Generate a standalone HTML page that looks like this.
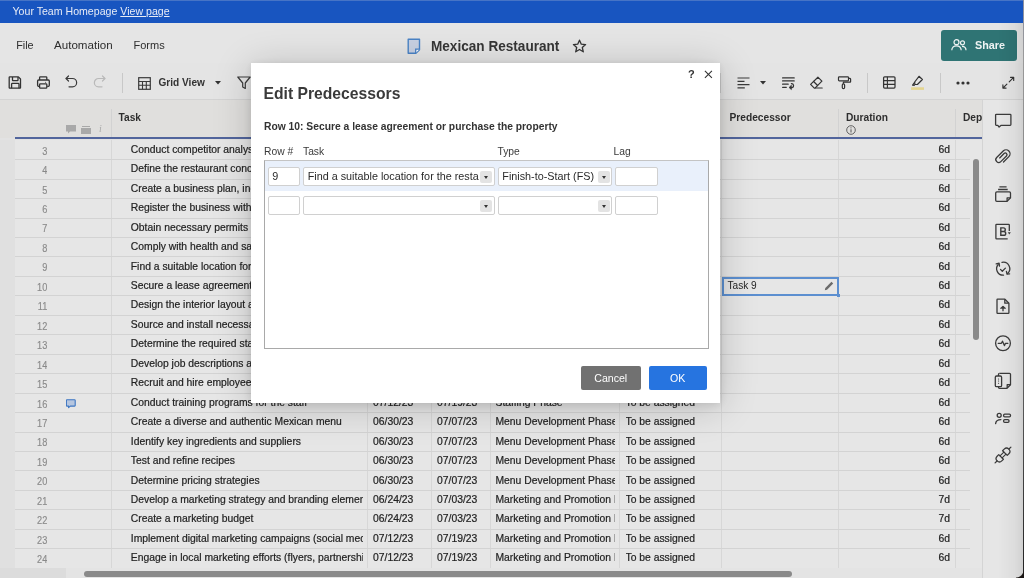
<!DOCTYPE html>
<html><head><meta charset="utf-8">
<style>
*{box-sizing:border-box;margin:0;padding:0}
html,body{width:1024px;height:578px;overflow:hidden}
#wrap{position:absolute;left:0;top:0;width:1024px;height:578px;overflow:hidden;will-change:transform}
body{position:relative;background:#e4e4e4;font-family:"Liberation Sans",sans-serif;color:#2a2a2a}
.abs{position:absolute}
#topbar{position:absolute;left:0;top:0;width:1024px;height:23px;background:#1855c0;border-top:1px solid #4674c6;color:#e8ecf6;font-size:10.6px;line-height:21.5px;padding-left:12.5px;white-space:nowrap}
#topbar u{text-decoration:underline}
#menubar{position:absolute;left:0;top:23px;width:1024px;height:40px;background:#e5e5e5}
.menu{position:absolute;top:16px;font-size:10.9px;color:#2e2e2e;line-height:13px}
#title{position:absolute;left:431px;top:36px;font-size:14.5px;font-weight:bold;color:#363636;line-height:16px;white-space:nowrap;transform:scaleX(0.937);transform-origin:0 0}
#share{position:absolute;left:941px;top:6.5px;width:76px;height:31px;background:#2f7474;border-radius:3px;color:#eef3f3}
#share span{position:absolute;left:34px;top:9px;font-size:10.8px;font-weight:bold;line-height:13px}
#toolbar{position:absolute;left:0;top:63px;width:1024px;height:37px;background:#e4e4e4;border-bottom:1px solid #d3d3d3}
.tsep{position:absolute;top:10px;width:1px;height:20px;background:#c8c8c8}
#gridview{position:absolute;left:158.5px;top:13px;font-size:10.1px;font-weight:bold;color:#333;line-height:13px}
#grid{position:absolute;left:0;top:100px;width:982px;height:478px;background:#e2e2e2}
#ghead{position:absolute;left:0;top:0;width:982px;height:38px;background:#e0dfdd}
.hd{position:absolute;top:11px;font-size:10.2px;font-weight:bold;color:#2e2e2e;line-height:13px}
#hline{position:absolute;left:15px;top:37.2px;width:967px;height:2px;background:#52659c}
#gbody{position:absolute;left:15px;top:140px;width:967px;height:428px;background:#e6e6e6}
.row{position:absolute;left:15px;width:955px;height:19.456px;border-bottom:1px solid #d3d3d3}
.row span{position:absolute;white-space:nowrap;overflow:hidden;font-size:10.35px;line-height:13px}
.rn{right:auto;left:0;width:32.3px;text-align:right;top:3.9px;color:#8a8a8a;font-size:10.2px!important;transform:scaleX(0.9);transform-origin:100% 0;-webkit-text-stroke:0.15px #8a8a8a}
.c{top:2.1px;color:#222;-webkit-text-stroke:0.2px #222}
.tk{left:115.8px;width:232.2px}
.sd{left:358px;width:58px}
.ed{left:422px;width:55px}
.ph{left:480.5px;width:119.5px}
.as{left:610.5px;width:95px}
.du{left:830px;width:105px;text-align:right}
.cm{left:51px;top:5px;width:10px;height:10px}
.vl{position:absolute;top:140px;width:1px;height:428px;background:#d7d7d7}
.vh{position:absolute;top:8.5px;width:1px;height:30px;background:#d2d2d2}
#sidebar{position:absolute;left:982px;top:100px;width:39px;height:478px;background:#e6e6e6;border-left:1px solid #d4d4d4}
#edge{position:absolute;left:998px;top:23px;width:26px;height:555px;background:linear-gradient(90deg,rgba(0,0,0,0),rgba(0,0,0,0.035) 60%,rgba(0,0,0,0.09))}
#edge2{position:absolute;left:1023px;top:0;width:1px;height:578px;background:linear-gradient(180deg,#8a8fa0,#9a9a9a 10%,#6a6a6a 60%,#222)}
#corner{position:absolute;left:1016px;top:570px;width:8px;height:8px;background:radial-gradient(circle at 0 0,rgba(0,0,0,0) 7px,#1a1614 8px)}
#vscroll{position:absolute;left:973px;top:159px;width:5.5px;height:181px;background:#8a8a8a;border-radius:3px}
#hscrollbg{position:absolute;left:0;top:567.5px;width:982px;height:10.5px;background:#e4e4e4}
#hscrollleft{position:absolute;left:0;top:567.5px;width:66px;height:10.5px;background:#dcdcdc}
#hscroll{position:absolute;left:84px;top:571px;width:708px;height:6px;background:#8a8a8a;border-radius:3px}
#gutter{position:absolute;left:0;top:140px;width:15px;height:438px;background:#e0e0e0}
/* modal */
#modal{position:absolute;left:251px;top:63px;width:468.5px;height:340px;background:#fff;box-shadow:0 1px 8px rgba(0,0,0,0.10),0 4px 36px rgba(0,0,0,0.20)}
#mtitle{position:absolute;left:12.5px;top:22px;font-size:15.7px;font-weight:bold;color:#3a3a3a;line-height:18px;white-space:nowrap}
#msub{position:absolute;left:13px;top:57px;font-size:10.3px;font-weight:bold;color:#333;line-height:13px;white-space:nowrap}
.mh{position:absolute;top:82px;font-size:10.3px;color:#3a3a3a;line-height:13px}
#mtable{position:absolute;left:13px;top:97px;width:444.5px;height:189px;border:1px solid #a9a9a9;border-top-color:#c4c4c4}
#hlrow{position:absolute;left:0;top:0;width:443px;height:29.5px;background:#e9f0fb}
.inp{position:absolute;height:19px;background:#fff;border:1px solid #d0d0d0;border-radius:2px;font-size:10.8px;color:#2a2a2a;line-height:17px;padding-left:3.5px;white-space:nowrap;overflow:hidden}
.dd{position:absolute;top:3px;width:12px;height:12px;background:#e3e3e3;border-radius:2px}
.dd:after{content:"";position:absolute;left:3.5px;top:5px;border-left:2.5px solid transparent;border-right:2.5px solid transparent;border-top:3px solid #333}
.btn{position:absolute;top:302.5px;height:24px;border-radius:2px;color:#fff;font-size:10.6px;line-height:24px;text-align:center}
#mhelp{position:absolute;left:437px;top:4.5px;font-size:11px;font-weight:bold;color:#333;line-height:13px}
</style></head><body><div id="wrap">
<div id="topbar">Your Team Homepage <u>View page</u></div>
<div id="menubar">
  <span class="menu" style="left:16.2px;font-size:10.8px">File</span>
  <span class="menu" style="left:54px;top:15.4px;font-size:11.6px">Automation</span>
  <span class="menu" style="left:133.5px;font-size:11px">Forms</span>
  <svg class="abs" style="left:407px;top:15px" width="14" height="16" viewBox="0 0 14 16"><path d="M1.2 1.2h11.3v10.5l-3.6 3.6H1.2z" fill="#c7d0e2" stroke="#4a83c6" stroke-width="1.4" stroke-linejoin="round"/><path d="M12.5 11.2h-3.8v3.9" fill="#fff" stroke="#4a83c6" stroke-width="1.3"/></svg>
  <div id="title" style="top:15.3px">Mexican Restaurant</div>
  <svg class="abs" style="left:572px;top:15.5px" width="15" height="14" viewBox="0 0 15 14"><path d="M7.5 1.2l1.8 4 4.3.4-3.3 2.9 1 4.3-3.8-2.3-3.8 2.3 1-4.3-3.3-2.9 4.3-.4z" fill="none" stroke="#333" stroke-width="1.3" stroke-linejoin="round"/></svg>
  <div id="share">
    <svg class="abs" style="left:10px;top:9.5px" width="16" height="12" viewBox="0 0 16 12"><circle cx="5.5" cy="3.2" r="2.5" fill="none" stroke="#eef3f3" stroke-width="1.2"/><path d="M0.8 11.3c0-2.8 2-4.5 4.7-4.5s4.7 1.7 4.7 4.5" fill="none" stroke="#eef3f3" stroke-width="1.2"/><circle cx="11.5" cy="3.8" r="2" fill="none" stroke="#eef3f3" stroke-width="1.2"/><path d="M11 7.3c2.5 0 4 1.5 4 4" fill="none" stroke="#eef3f3" stroke-width="1.2"/></svg>
    <span>Share</span>
  </div>
</div>
<div id="toolbar">
  <!-- save -->
  <svg class="abs" style="left:8px;top:12px" width="15" height="15" viewBox="8 75 15 15" fill="none" stroke="#333" stroke-width="1.3" stroke-linejoin="round"><path d="M9.8 76.9H18.4L20.5 79V87.6a0.6 0.6 0 0 1-.6.6H9.8a0.6 0.6 0 0 1-.6-.6V77.5a0.6 0.6 0 0 1 .6-.6z"/><path d="M12.5 76.9V80a0.6 0.6 0 0 0 .6.6H17.4a0.6 0.6 0 0 0 .6-.6V76.9"/><path d="M11.6 88.2V84.2a0.8 0.8 0 0 1 .8-.8H18.2a0.8 0.8 0 0 1 .8.8V88.2"/></svg>
  <!-- print -->
  <svg class="abs" style="left:35px;top:12px" width="16" height="15" viewBox="35 75 16 15" fill="none" stroke="#333" stroke-width="1.3" stroke-linejoin="round"><path d="M39.6 80V77.6a0.8 0.8 0 0 1 .8-.8H46a0.8 0.8 0 0 1 .8.8V80"/><path d="M39.3 86.3H38.6a1 1 0 0 1-1-1V81a1 1 0 0 1 1-1H48.3a1 1 0 0 1 1 1V85.3a1 1 0 0 1-1 1H47.2"/><rect x="39.6" y="83.8" width="7.2" height="4.4" rx="0.8"/><circle cx="45.6" cy="82.2" r="0.5" fill="#333" stroke="none"/></svg>
  <!-- undo -->
  <svg class="abs" style="left:65px;top:12.3px" width="13" height="13" viewBox="0 0 13 13"><path d="M3.5 1L1 3.5 3.5 6" fill="none" stroke="#3a3a3a" stroke-width="1.2" stroke-linecap="round" stroke-linejoin="round"/><path d="M1.3 3.5H7.5a4 4 0 0 1 0 8.3H4" fill="none" stroke="#3a3a3a" stroke-width="1.2" stroke-linecap="round"/></svg>
  <!-- redo -->
  <svg class="abs" style="left:92.5px;top:12.3px" width="13" height="13" viewBox="0 0 13 13"><path d="M9.5 1L12 3.5 9.5 6" fill="none" stroke="#b9b9b9" stroke-width="1.2" stroke-linecap="round" stroke-linejoin="round"/><path d="M11.7 3.5H5.5a4 4 0 0 0 0 8.3H9" fill="none" stroke="#b9b9b9" stroke-width="1.2" stroke-linecap="round"/></svg>
  <div class="tsep" style="left:121.5px"></div>
  <!-- grid icon -->
  <svg class="abs" style="left:137.5px;top:13.5px" width="13" height="13" viewBox="0 0 13 13"><rect x="0.7" y="0.7" width="11.6" height="11.6" fill="none" stroke="#3a3a3a" stroke-width="1.2"/><path d="M0.7 4.5h11.6M0.7 8.3h11.6M4.5 4.5v7.8M8.3 4.5v7.8" stroke="#3a3a3a" stroke-width="1.1"/></svg>
  <span id="gridview">Grid View</span>
  <svg class="abs" style="left:215px;top:17.5px" width="6" height="4" viewBox="0 0 6 4"><path d="M0 0h6L3 3.5z" fill="#333"/></svg>
  <svg class="abs" style="left:237px;top:13px" width="14" height="14" viewBox="0 0 14 14"><path d="M0.8 1h12.4L8.3 7v5.5L5.7 11V7z" fill="none" stroke="#3a3a3a" stroke-width="1.2" stroke-linejoin="round"/></svg>
  <!-- right tools -->
  <svg class="abs" style="left:736.5px;top:14px" width="14" height="12" viewBox="0 0 14 12"><path d="M0.5 1h12M0.5 4.3h7M0.5 7.6h12M0.5 10.9h7.3" stroke="#3a3a3a" stroke-width="1.2"/></svg>
  <svg class="abs" style="left:760px;top:18px" width="6" height="4" viewBox="0 0 6 4"><path d="M0 0h6L3 3.5z" fill="#333"/></svg>
  <svg class="abs" style="left:780px;top:12px" width="18" height="16" viewBox="780 75 18 16" fill="none" stroke="#333" stroke-width="1.25" stroke-linecap="round"><path d="M782.6 77.9h11.6M782.6 80.9h11.6M782.6 84.2h5.6M782.6 87.3h3.7"/><path d="M791.4 83.6a2.1 2.1 0 0 1 .7 4.1h-1.3"/><path d="M791.1 85.6l-2 1.9 2 1.8z" fill="#333" stroke-width="0.8" stroke-linejoin="round"/></svg>
  <svg class="abs" style="left:806px;top:12px" width="20" height="16" viewBox="806 75 20 16" fill="none" stroke="#333" stroke-width="1.2" stroke-linejoin="round" stroke-linecap="round"><path d="M817.9 77.2L821.9 81.2 815 88.1 814.3 88.1 810.6 84.4z"/><path d="M813.6 81.5L817.6 85.5"/><path d="M815.6 88h6.6"/></svg>
  <svg class="abs" style="left:836px;top:12px" width="16" height="16" viewBox="836 75 16 16" fill="none" stroke="#333" stroke-width="1.2" stroke-linejoin="round"><rect x="838.5" y="76.8" width="10" height="4" rx="0.8"/><path d="M848.6 78.4h1.4a0.6 0.6 0 0 1 .6.6v2.6a0.6 0.6 0 0 1-.6.6h-6.6v1.6"/><rect x="842.3" y="83.9" width="2.3" height="4.8" rx="1.1"/></svg>
  <div class="tsep" style="left:866.5px"></div><div class="tsep" style="left:720px"></div>
  <svg class="abs" style="left:880px;top:12px" width="18" height="16" viewBox="880 75 18 16" fill="none" stroke="#333" stroke-width="1.25" stroke-linejoin="round"><rect x="883.6" y="76.8" width="11.4" height="11.3" rx="1"/><path d="M887.4 76.8v11.3M883.6 80.6h11.4M883.6 84.4h11.4" stroke-width="1.1"/></svg>
  <svg class="abs" style="left:908px;top:12px" width="18" height="16" viewBox="908 75 18 16" fill="none" stroke="#333" stroke-width="1.2" stroke-linejoin="round"><path d="M919 76.3l3.4 3.2-5 5h-2.6l-.1-2.5z"/><path d="M914.8 82l-2.2 3.2 2.2 0.1" /><rect x="911.1" y="87.3" width="12.9" height="2.6" fill="#e4d58f" stroke="none"/></svg>
  <div class="tsep" style="left:940px"></div>
  <svg class="abs" style="left:955.5px;top:17.5px" width="14" height="4" viewBox="0 0 14 4"><circle cx="2" cy="2" r="1.6" fill="#333"/><circle cx="7" cy="2" r="1.6" fill="#333"/><circle cx="12" cy="2" r="1.6" fill="#333"/></svg>
  <svg class="abs" style="left:1000px;top:12px" width="17" height="16" viewBox="1000 75 17 16" fill="none" stroke="#333" stroke-width="1.15" stroke-linecap="round" stroke-linejoin="round"><path d="M1009.2 81.8L1013.6 77.4M1010.5 77.3H1013.7V80.5"/><path d="M1006.9 84.1L1002.9 88.1M1002.9 84.9V88.1H1006.1"/></svg>
</div>
<div id="grid">
  <div id="ghead"></div>
  <span class="hd" style="left:118.5px">Task</span>
  <span class="hd" style="left:729.5px">Predecessor</span>
  <span class="hd" style="left:846px">Duration</span>
  <span class="hd" style="left:963px">Dep</span>
  <svg class="abs" style="left:846px;top:24.5px" width="10" height="10" viewBox="0 0 10 10"><circle cx="5" cy="5" r="4.3" fill="none" stroke="#555" stroke-width="0.9"/><path d="M5 4.3v3.2" stroke="#555" stroke-width="1"/><circle cx="5" cy="2.8" r="0.6" fill="#555"/></svg>
  <svg class="abs" style="left:66px;top:25px" width="10" height="9" viewBox="0 0 10 9"><path d="M0 0h10v6.5H4L2 8.5V6.5H0z" fill="#a9a9a9"/></svg>
  <svg class="abs" style="left:81px;top:25.5px" width="10" height="8" viewBox="0 0 10 8"><path d="M1 0h8v1H1z M0 2h10v6H0z" fill="#a9a9a9"/></svg>
  <span class="abs" style="left:99px;top:22.5px;font-size:10px;font-style:italic;color:#aaa;font-family:'Liberation Serif',serif">i</span>
  <div class="vh" style="left:110.5px"></div>
  <div class="vh" style="left:838px"></div>
  <div class="vh" style="left:955px"></div>
  <div id="hline"></div>
</div>
<div id="gutter"></div>
<div id="gbody"></div>
<div class="vl" style="left:110.5px"></div>
<div class="vl" style="left:367.0px"></div>
<div class="vl" style="left:431.0px"></div>
<div class="vl" style="left:490.0px"></div>
<div class="vl" style="left:619.0px"></div>
<div class="vl" style="left:721.0px"></div>
<div class="vl" style="left:838.0px"></div>
<div class="vl" style="left:955.0px"></div>
<div class="row" style="top:140.70px">
<span class="rn">3</span>
<span class="c tk">Conduct competitor analysis and market research</span>
<span class="c du">6d</span>
</div>
<div class="row" style="top:160.16px">
<span class="rn">4</span>
<span class="c tk">Define the restaurant concept and theme</span>
<span class="c du">6d</span>
</div>
<div class="row" style="top:179.61px">
<span class="rn">5</span>
<span class="c tk">Create a business plan, including financial projections</span>
<span class="c du">6d</span>
</div>
<div class="row" style="top:199.07px">
<span class="rn">6</span>
<span class="c tk">Register the business with local authorities</span>
<span class="c du">6d</span>
</div>
<div class="row" style="top:218.52px">
<span class="rn">7</span>
<span class="c tk">Obtain necessary permits and licenses</span>
<span class="c du">6d</span>
</div>
<div class="row" style="top:237.98px">
<span class="rn">8</span>
<span class="c tk">Comply with health and safety regulations</span>
<span class="c du">6d</span>
</div>
<div class="row" style="top:257.44px">
<span class="rn">9</span>
<span class="c tk">Find a suitable location for the restaurant</span>
<span class="c du">6d</span>
</div>
<div class="row" style="top:276.89px">
<span class="rn">10</span>
<span class="c tk">Secure a lease agreement or purchase the property</span>
<span class="c du">6d</span>
</div>
<div class="row" style="top:296.35px">
<span class="rn">11</span>
<span class="c tk">Design the interior layout and decor</span>
<span class="c du">6d</span>
</div>
<div class="row" style="top:315.80px">
<span class="rn">12</span>
<span class="c tk">Source and install necessary equipment</span>
<span class="c du">6d</span>
</div>
<div class="row" style="top:335.26px">
<span class="rn">13</span>
<span class="c tk">Determine the required staff positions</span>
<span class="c du">6d</span>
</div>
<div class="row" style="top:354.72px">
<span class="rn">14</span>
<span class="c tk">Develop job descriptions and requirements</span>
<span class="c du">6d</span>
</div>
<div class="row" style="top:374.17px">
<span class="rn">15</span>
<span class="c tk">Recruit and hire employees</span>
<span class="c du">6d</span>
</div>
<div class="row" style="top:393.63px">
<span class="rn">16</span>
<svg class="cmi" style="position:absolute;left:51px;top:5.5px" width="10" height="10" viewBox="0 0 10 10"><path d="M1 0.8h7.6a0.6 0.6 0 0 1 .6.6v5.1a0.6 0.6 0 0 1-.6.6H4.3L2.6 8.7V7.1H1a0.6 0.6 0 0 1-.6-.6V1.4A0.6 0.6 0 0 1 1 0.8z" fill="#b6c6df" stroke="#3d76c2" stroke-width="1.1" stroke-linejoin="round"/></svg>
<span class="c tk">Conduct training programs for the staff</span>
<span class="c sd">07/12/23</span><span class="c ed">07/19/23</span><span class="c ph">Staffing Phase</span><span class="c as">To be assigned</span>
<span class="c du">6d</span>
</div>
<div class="row" style="top:413.08px">
<span class="rn">17</span>
<span class="c tk">Create a diverse and authentic Mexican menu</span>
<span class="c sd">06/30/23</span><span class="c ed">07/07/23</span><span class="c ph">Menu Development Phase</span><span class="c as">To be assigned</span>
<span class="c du">6d</span>
</div>
<div class="row" style="top:432.54px">
<span class="rn">18</span>
<span class="c tk">Identify key ingredients and suppliers</span>
<span class="c sd">06/30/23</span><span class="c ed">07/07/23</span><span class="c ph">Menu Development Phase</span><span class="c as">To be assigned</span>
<span class="c du">6d</span>
</div>
<div class="row" style="top:452.00px">
<span class="rn">19</span>
<span class="c tk">Test and refine recipes</span>
<span class="c sd">06/30/23</span><span class="c ed">07/07/23</span><span class="c ph">Menu Development Phase</span><span class="c as">To be assigned</span>
<span class="c du">6d</span>
</div>
<div class="row" style="top:471.45px">
<span class="rn">20</span>
<span class="c tk">Determine pricing strategies</span>
<span class="c sd">06/30/23</span><span class="c ed">07/07/23</span><span class="c ph">Menu Development Phase</span><span class="c as">To be assigned</span>
<span class="c du">6d</span>
</div>
<div class="row" style="top:490.91px">
<span class="rn">21</span>
<span class="c tk">Develop a marketing strategy and branding elements</span>
<span class="c sd">06/24/23</span><span class="c ed">07/03/23</span><span class="c ph">Marketing and Promotion Phase</span><span class="c as">To be assigned</span>
<span class="c du">7d</span>
</div>
<div class="row" style="top:510.36px">
<span class="rn">22</span>
<span class="c tk">Create a marketing budget</span>
<span class="c sd">06/24/23</span><span class="c ed">07/03/23</span><span class="c ph">Marketing and Promotion Phase</span><span class="c as">To be assigned</span>
<span class="c du">7d</span>
</div>
<div class="row" style="top:529.82px">
<span class="rn">23</span>
<span class="c tk">Implement digital marketing campaigns (social media)</span>
<span class="c sd">07/12/23</span><span class="c ed">07/19/23</span><span class="c ph">Marketing and Promotion Phase</span><span class="c as">To be assigned</span>
<span class="c du">6d</span>
</div>
<div class="row" style="top:549.28px;border-bottom:none">
<span class="rn">24</span>
<span class="c tk">Engage in local marketing efforts (flyers, partnerships)</span>
<span class="c sd">07/12/23</span><span class="c ed">07/19/23</span><span class="c ph">Marketing and Promotion Phase</span><span class="c as">To be assigned</span>
<span class="c du">6d</span>
</div>
<div id="hscrollbg"></div>
<div id="hscrollleft"></div>
<div id="hscroll"></div>
<div id="vscroll"></div>
<!-- selection -->
<div class="abs" style="left:722px;top:276.5px;width:117px;height:19.5px;border:2px solid #5c8fd0"></div>
<div class="abs" style="left:836.5px;top:293.5px;width:3px;height:3px;background:#5c8fd0"></div>
<span class="abs" style="left:727.5px;top:280px;font-size:10.1px;line-height:12px;color:#262626">Task 9</span>
<svg class="abs" style="left:824px;top:281px" width="10" height="10" viewBox="0 0 10 10"><path d="M7.5 0.8l1.7 1.7L3 8.7 0.8 9.2 1.3 7z" fill="#6a6a6a"/></svg>
<div id="sidebar"></div>
<div id="edge"></div><div id="edge2"></div><div id="corner"></div>
<svg class="abs" style="left:988px;top:108px" width="30" height="30" viewBox="0 0 30 30" fill="none" stroke="#3a3a3a" stroke-width="1.3" stroke-linejoin="round"><path d="M8.3 6.3h13.9a0.7 0.7 0 0 1 .7.7v9.6a0.7 0.7 0 0 1-.7.7H13.2l-2.1 1.8-1.3-1.8H8.3a0.7 0.7 0 0 1-.7-.7V7a0.7 0.7 0 0 1 .7-.7z"/></svg>
<svg class="abs" style="left:988px;top:142px" width="30" height="30" viewBox="0 0 30 30" fill="none" stroke="#3a3a3a" stroke-width="1.3" stroke-linecap="round"><path transform="rotate(45 15 15)" d="M13.3 18V11.8a1.7 1.7 0 0 1 3.4 0V19.8a2.9 2.9 0 0 1-5.8 0V10.6a4 4 0 0 1 8 0V18.2"/></svg>
<svg class="abs" style="left:988px;top:180px" width="30" height="30" viewBox="0 0 30 30" fill="none" stroke="#3a3a3a" stroke-width="1.3" stroke-linejoin="round"><path d="M11.4 6.8h7.2M10.1 9.5h9.6"/><path d="M8.8 11.8h12.6a1.1 1.1 0 0 1 1.1 1.1v5l-3.4 3.4H8.8a1.1 1.1 0 0 1-1.1-1.1v-7.3a1.1 1.1 0 0 1 1.1-1.1z"/><path d="M22.5 17.9h-3.4v3.4"/></svg>
<svg class="abs" style="left:988px;top:217px" width="30" height="30" viewBox="0 0 30 30" fill="none" stroke="#3a3a3a" stroke-width="1.3"><path d="M19.7 21.9H8.6a0.7 0.7 0 0 1-.7-.7V8a0.7 0.7 0 0 1 .7-.7h12a0.7 0.7 0 0 1 .7.7v6"/><path d="M12.8 10.9h2.7a1.8 1.8 0 0 1 0 3.6h-2.7zM12.8 14.5h3a1.9 1.9 0 0 1 0 3.8h-3z" stroke-width="1.4"/><path d="M19.8 15.3h3l-1.5 2.1z" fill="#3a3a3a" stroke="none"/></svg>
<svg class="abs" style="left:988px;top:254px" width="30" height="30" viewBox="0 0 30 30" fill="none" stroke="#3a3a3a" stroke-width="1.3" stroke-linecap="round"><path d="M10.2 10.5A6.5 6.5 0 0 0 15.5 21.2"/><path d="M14 8.3A6.5 6.5 0 0 1 19.6 19.5"/><path d="M8.2 9.8l2.9-.6.4 3" stroke-linejoin="round"/><path d="M21.6 19.8l-2.6.4-.6-2.9" stroke-linejoin="round"/><path d="M12.5 15.4l1.8 1.8 3.1-3.1" stroke-linejoin="round"/></svg>
<svg class="abs" style="left:988px;top:291px" width="30" height="30" viewBox="0 0 30 30" fill="none" stroke="#3a3a3a" stroke-width="1.3" stroke-linejoin="round"><path d="M9.6 8.2h7.3l4 4v9.6a0.6 0.6 0 0 1-.6.6H9.6a0.6 0.6 0 0 1-.6-.6V8.8a0.6 0.6 0 0 1 .6-.6z"/><path d="M16.8 8.2v4h4"/><path d="M15 20.3v-4.5"/><path d="M12.4 17.3L15 15l2.6 2.3z" fill="#3a3a3a" stroke-width="0.8"/></svg>
<svg class="abs" style="left:988px;top:328px" width="30" height="30" viewBox="0 0 30 30" fill="none" stroke="#3a3a3a" stroke-width="1.3" stroke-linejoin="round" stroke-linecap="round"><circle cx="15" cy="15.3" r="7.4"/><path d="M10.2 15.3h3.2l1.1-2.1 1.9 4.4 1.1-2.3h2.4"/></svg>
<svg class="abs" style="left:988px;top:365px" width="30" height="30" viewBox="0 0 30 30" fill="none" stroke="#3a3a3a" stroke-width="1.3" stroke-linejoin="round"><path d="M11.5 8.3h10a1 1 0 0 1 1 1v10.5l-3.5 3.5h-7.5a1 1 0 0 1-1-1V21.6"/><path d="M10.5 11V9.3a1 1 0 0 1 1-1"/><path d="M22.5 19.6h-3.3v3.5"/><rect x="7.3" y="11" width="6.3" height="10.6" rx="1.2" fill="#e4e4e4"/><path d="M10.5 14h.1M10.5 16h.1M10.5 18.2h.1" stroke-width="1.1" stroke-linecap="round"/></svg>
<svg class="abs" style="left:988px;top:403px" width="30" height="30" viewBox="0 0 30 30" fill="none" stroke="#3a3a3a" stroke-width="1.3" stroke-linecap="round"><circle cx="11.2" cy="12.3" r="2"/><path d="M7.6 20.6c.3-2.6 1.7-4 5.3-4"/><rect x="15.6" y="11.2" width="6.9" height="2.7" rx="1.1"/><rect x="15.6" y="16.7" width="5.4" height="2.7" rx="1.1"/></svg>
<svg class="abs" style="left:988px;top:440px" width="30" height="30" viewBox="0 0 30 30" fill="none" stroke="#3a3a3a" stroke-width="1.25" stroke-linecap="round" stroke-linejoin="round"><g transform="rotate(45 15 15)"><path d="M15 6.6V3.8"/><path d="M11.7 12.3h6.6v-2.3a3.3 3.3 0 0 0-6.6 0z"/><path d="M11.7 17.7h6.6v2.3a3.3 3.3 0 0 1-6.6 0z"/><path d="M15 23.4v2.8"/><path d="M13.5 12.3v5.4M16.5 12.3v5.4" stroke-width="1.1"/></g></svg>

<!-- modal -->
<div id="modal">
  <span id="mhelp">?</span>
  <svg class="abs" style="left:452.5px;top:7px" width="9" height="9" viewBox="0 0 9 9"><path d="M0.9 0.9l7 7M7.9 0.9l-7 7" stroke="#333" stroke-width="1.1"/></svg>
  <div id="mtitle">Edit Predecessors</div>
  <div id="msub">Row 10: Secure a lease agreement or purchase the property</div>
  <span class="mh" style="left:13px">Row #</span>
  <span class="mh" style="left:52px">Task</span>
  <span class="mh" style="left:246.5px">Type</span>
  <span class="mh" style="left:362.5px">Lag</span>
  <div id="mtable">
    <div id="hlrow"></div>
    <div class="inp" style="left:2.8px;top:5.5px;width:32.5px">9</div>
    <div class="inp" style="left:38.2px;top:5.5px;width:192.2px">Find a suitable location for the resta<span class="dd" style="left:176.2px"></span></div>
    <div class="inp" style="left:232.8px;top:5.5px;width:114.5px">Finish-to-Start (FS)<span class="dd" style="left:99.5px"></span></div>
    <div class="inp" style="left:349.8px;top:5.5px;width:43.5px"></div>
    <div class="inp" style="left:2.8px;top:35px;width:32.5px"></div>
    <div class="inp" style="left:38.2px;top:35px;width:192.2px"><span class="dd" style="left:176.2px"></span></div>
    <div class="inp" style="left:232.8px;top:35px;width:114.5px"><span class="dd" style="left:99.5px"></span></div>
    <div class="inp" style="left:349.8px;top:35px;width:43.5px"></div>
  </div>
  <div class="btn" style="left:330px;width:59.5px;background:#717171">Cancel</div>
  <div class="btn" style="left:397.5px;width:58.5px;background:#2674e0">OK</div>
</div>
</div></body></html>
